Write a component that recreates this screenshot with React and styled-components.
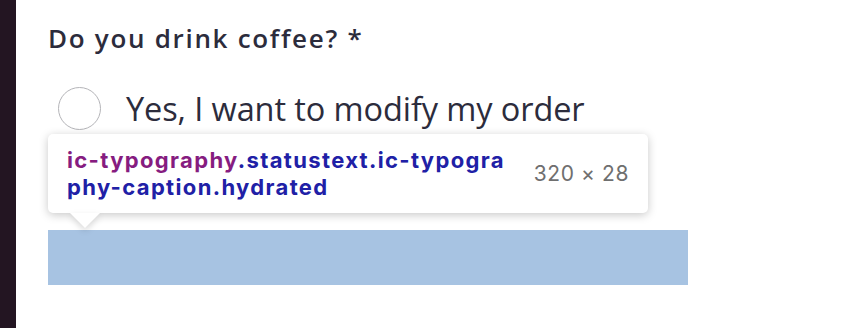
import React from 'react'
import styled, { createGlobalStyle } from 'styled-components'

const GlobalStyle = createGlobalStyle`
    html, body {
        margin: 0;
        padding: 0;
        background: #ffffff;
        font-family: "Open Sans", "Noto Sans", sans-serif;
    }
`

const App = () => {
    return (
        <Page>
            <GlobalStyle />
            <SideStrip />
            <Content>
                <Question>Do you drink coffee? *</Question>
                <OptionRow>
                    <Radio />
                    <OptionLabel>Yes, I want to modify my order</OptionLabel>
                </OptionRow>
                <HighlightArea>
                    <Tooltip>
                        <Selector>
                            <SelectorLine><Tag>ic-typography</Tag>.statustext.ic-typogra</SelectorLine>
                            <SelectorLine>phy-caption.hydrated</SelectorLine>
                        </Selector>
                        <Size>320 × 28</Size>
                        <Arrow />
                    </Tooltip>
                    <Highlight />
                </HighlightArea>
            </Content>
        </Page>
    )
}

export default App

const Page = styled.div`
    display: flex;
    width: 852px;
    height: 328px;
    overflow: hidden;
`
const SideStrip = styled.div`
    width: 16px;
    flex-shrink: 0;
    background-color: #231522;
`
const Content = styled.div`
    flex: 1;
    padding: 20px 0 0 32px;
    display: flex;
    flex-direction: column;
`
const Question = styled.div`
    font-size: 26px;
    font-weight: 600;
    color: #2c2c3c;
    line-height: 36px;
    letter-spacing: 1.7px;
`
const OptionRow = styled.div`
    display: flex;
    align-items: center;
    gap: 25px;
    margin-top: 31px;
    padding-left: 10px;
`
const Radio = styled.div`
    width: 41px;
    height: 41px;
    border: 1.5px solid #b4b4b8;
    border-radius: 50%;
    box-sizing: content-box;
`
const OptionLabel = styled.div`
    font-size: 32.5px;
    color: #2c2c3c;
    line-height: 42px;
    letter-spacing: -0.1px;
`
const HighlightArea = styled.div`
    position: relative;
    margin-top: 100px;
`
const Highlight = styled.div`
    width: 640px;
    height: 55px;
    background-color: #a7c3e2;
`
const Tooltip = styled.div`
    position: absolute;
    left: 0;
    bottom: calc(100% + 17px);
    width: 600px;
    height: 79px;
    box-sizing: border-box;
    padding: 13px 19px 0 19px;
    background: #ffffff;
    border-radius: 5px;
    box-shadow: 0 2px 10px rgba(0, 0, 0, 0.22);
    display: flex;
    justify-content: space-between;
    align-items: flex-start;
    font-family: Inter, "Open Sans", sans-serif;
`
const Selector = styled.div`
    display: flex;
    flex-direction: column;
    font-size: 22px;
    font-weight: 700;
    color: #2020a6;
    letter-spacing: 1.35px;
    white-space: nowrap;
`
const SelectorLine = styled.div`
    height: 27px;
    line-height: 27px;
`
const Tag = styled.span`
    color: #861c80;
`
const Size = styled.div`
    font-size: 21px;
    color: #6f6f6f;
    margin-top: 13px;
    line-height: 27px;
    letter-spacing: 0.6px;
`
const Arrow = styled.div`
    position: absolute;
    left: 22px;
    bottom: -15px;
    width: 0;
    height: 0;
    border-left: 15px solid transparent;
    border-right: 15px solid transparent;
    border-top: 15px solid #ffffff;
    filter: drop-shadow(0 3px 3px rgba(0, 0, 0, 0.15));
`
